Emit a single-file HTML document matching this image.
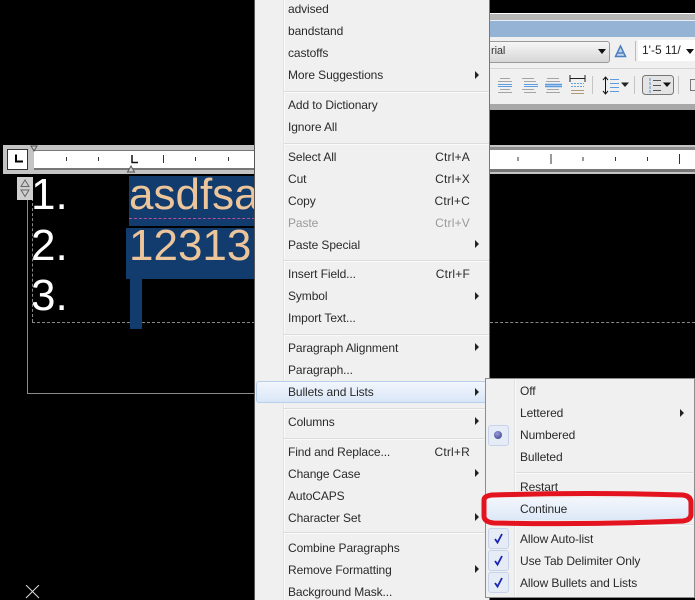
<!DOCTYPE html>
<html><head><meta charset="utf-8"><style>
html,body{margin:0;padding:0;background:#000}
#p{position:relative;width:695px;height:600px;overflow:hidden;background:#000;font-family:"Liberation Sans",sans-serif;filter:blur(.3px)}
#p div{position:absolute}
.t{font-size:12px;line-height:16px;color:#2a2a2a;white-space:nowrap;letter-spacing:-.1px;height:16px}
.k{text-align:right;width:60px;left:410px;letter-spacing:.2px}
.g{color:#9a9a9a}
.a{width:0;height:0;border-left:4px solid #222;border-top:4px solid transparent;border-bottom:4px solid transparent;left:475px}
.s{left:284px;width:205px;height:1px;background:#dcdcdc;border-bottom:1px solid #fafafa}
.s2{left:516px;width:177px;height:1px;background:#dcdcdc;border-bottom:1px solid #fafafa}
.n{font-size:44px;line-height:46px;color:#fff;height:46px}
.o{font-size:44px;line-height:46px;color:#edc59a;height:46px;white-space:nowrap}
.b{background:#123c6e}
.c{left:488px;width:21px;height:21px;background:#e6ecf6;border:1px solid #c6d3ea;border-radius:3px;box-sizing:border-box}
</style></head><body><div id="p">

<!-- toolbar -->
<div style="left:490px;top:13px;width:205px;height:1px;background:#fff"></div>
<div style="left:490px;top:14px;width:205px;height:6px;background:#b6b6b6"></div>
<div style="left:490px;top:20px;width:205px;height:1px;background:#e8eef5"></div>
<div style="left:490px;top:21px;width:205px;height:16px;background:#95b3d5"></div>
<div style="left:490px;top:37px;width:205px;height:68px;background:#f0f0f0"></div>
<div style="left:490px;top:68px;width:205px;height:1px;background:#d4d4d4"></div>
<div style="left:490px;top:104px;width:205px;height:6px;background:#a8a8a8"></div>
<div style="left:480px;top:41px;width:128px;height:20px;background:linear-gradient(#f6f6f6,#d6d6d6);border:1px solid #9a9a9a;border-radius:3px"></div>
<div class="t" style="left:491px;top:43px;font-size:11px;color:#333">rial</div>
<div style="left:598px;top:49px;border-left:4px solid transparent;border-right:4px solid transparent;border-top:5px solid #111"></div>
<svg style="position:absolute;left:613px;top:44px" width="15" height="15"><path d="M7.5 2L2.5 12.5H12.5Z M5 9H10" fill="#c3d5ee" stroke="#4a7fc0" stroke-width="1.5"/></svg>
<div style="left:635px;top:41px;width:1px;height:20px;background:#bbb"></div>
<div style="left:638px;top:40px;width:57px;height:21px;background:#fff"></div>
<div class="t" style="left:642px;top:42px;color:#222;letter-spacing:0">1'-5 11/</div>
<div style="left:686px;top:49px;border-left:4px solid transparent;border-right:4px solid transparent;border-top:5px solid #111"></div>
<svg style="position:absolute;left:490px;top:70px" width="205" height="34" fill="none" stroke-width="1">
<path d="M10 8.500H20M8 11.500H22M10 19.500H20M8 22.500H22" stroke="#a4a4a4"/>
<path d="M8 14.500H22M8 16.500H22" stroke="#5b9be0"/>
<path d="M32 8.500H44M34 11.500H46M32 19.500H44M34 22.500H46" stroke="#a4a4a4"/>
<path d="M34 14.500H48M34 16.500H48" stroke="#5b9be0"/>
<path d="M57 8.500H69M56 11.500H70M57 19.500H69M56 22.500H70" stroke="#a4a4a4"/>
<path d="M55 14.500H72M55 16.500H72" stroke="#5b9be0" stroke-width="1.500"/>
<path d="M80 8.500H95M80 5V12M95 5V12" stroke="#222"/>
<path d="M81 13.500H94M81 16.500H94" stroke="#6aa0dc" stroke-dasharray="2 1"/>
<path d="M81 20.500H94M81 23.500H94" stroke="#b09a78"/>
<path d="M102.500 6V24" stroke="#c4c4c4"/>
<path d="M115.500 8V23M113 10L115.500 7L118 10M113 21L115.500 24L118 21" stroke="#111"/>
<path d="M120 9.500H129M120 13.500H129M120 17.500H129M120 21.500H129" stroke="#5b9be0"/>
<path d="M131 12.500H139L135 17Z" fill="#222"/>
<path d="M144.500 6V24" stroke="#c4c4c4"/>
<rect x="152.500" y="5.500" width="31" height="19" rx="3" fill="#e4e4e4" stroke="#777"/>
<path d="M160 8V23" stroke="#4f8fd8" stroke-dasharray="3 1"/>
<path d="M163 10.500H171M163 15.500H171M163 20.500H171" stroke="#555"/>
<path d="M173 12.500H181L177 17Z" fill="#111"/>
<path d="M188.500 6V24" stroke="#c4c4c4"/>
<rect x="200.500" y="9.500" width="10" height="11" stroke="#777"/>
</svg>

<!-- ruler -->
<div style="left:3px;top:145px;width:252px;height:29px;background:#c4c4c4"></div>
<div style="left:490px;top:145px;width:205px;height:29px;background:#c4c4c4"></div>
<div style="left:490px;top:147px;width:205px;height:3px;background:#8e8e8e"></div>
<div style="left:490px;top:169px;width:205px;height:3px;background:#767676"></div>
<div style="left:34px;top:150px;width:221px;height:20px;background:#fff;border-top:1px solid #777;border-bottom:2px solid #777;box-sizing:border-box"></div>
<div style="left:490px;top:150px;width:205px;height:19px;background:#fff;box-sizing:border-box"></div>
<div style="left:7px;top:149px;width:21px;height:21px;background:#fff;border:1px solid #333;box-sizing:border-box"></div>
<svg style="position:absolute;left:0;top:145px" width="695" height="30" fill="none" stroke="#333">
<path d="M16 9.500V16.500H23" stroke="#000" stroke-width="2"/>
<path d="M31 1H37L34 6Z" fill="#ccc" stroke="#555"/>
<path d="M66.500 12V16M98.500 12V16M163.500 10V18M195.500 12V16M228.500 12V16" />
<path d="M132 10V17.500H138" stroke="#111" stroke-width="1.500"/>
<path d="M131 21L127.500 27H134.500Z" fill="#ccc" stroke="#555"/>
<path d="M518 12V16M551 9V19M583 12V16M615.500 12V16M647.500 12V16M679.500 9V19" />
</svg>

<!-- editor -->
<div style="left:27px;top:198px;width:1px;height:196px;background:#8a8a8a"></div>
<div style="left:27px;top:393px;width:228px;height:1px;background:#8a8a8a"></div>
<div style="left:32px;top:198px;width:0;height:124px;border-left:1px dashed #888"></div>
<div style="left:32px;top:322px;width:223px;height:0;border-top:1px dashed #888"></div>
<div style="left:490px;top:322px;width:205px;height:0;border-top:1px dashed #888"></div>
<svg style="position:absolute;left:17px;top:177px" width="16" height="23"><rect width="16" height="23" fill="#cfcfcf"/><path d="M8 3L4 9.500H12ZM8 19.500L4 13H12Z" fill="none" stroke="#666"/></svg>
<div class="b" style="left:129px;top:176px;width:126px;height:50px"></div>
<div style="left:129px;top:218px;width:126px;height:0;border-top:1px dashed #b84f9e"></div>
<div style="left:126px;top:228px;width:129px;height:51px" class="b"></div>
<div style="left:130px;top:279px;width:12px;height:50px" class="b"></div>
<div class="n" style="left:31px;top:172px">1.</div>
<div class="n" style="left:31px;top:223px">2.</div>
<div class="n" style="left:31px;top:273px">3.</div>
<div style="left:129px;top:172px;width:126px;height:46px;overflow:hidden"><div class="o" style="left:0;top:0">asdfsa</div></div>
<div class="o" style="left:129px;top:223px;width:126px;overflow:hidden">12313</div>
<svg style="position:absolute;left:25px;top:585px" width="15" height="15"><path d="M1 0L14 13M14 0L1 13" stroke="#ddd" fill="none"/></svg>

<!-- main menu -->
<div style="left:254px;top:-2px;width:236px;height:604px;background:#f0f0f0;border-left:1px solid #555;border-right:1px solid #777;box-sizing:border-box"></div>
<div style="left:283px;top:0;width:1px;height:600px;background:#e2e2e2"></div>
<div style="left:284px;top:0;width:1px;height:600px;background:#fafafa"></div>

<div class="s" style="top:91px"></div>
<div class="s" style="top:143px"></div>
<div class="s" style="top:260px"></div>
<div class="s" style="top:334px"></div>
<div class="s" style="top:408px"></div>
<div class="s" style="top:438px"></div>
<div class="s" style="top:532px"></div>

<div class="t" style="left:288px;top:1px">advised</div>
<div class="t" style="left:288px;top:23px">bandstand</div>
<div class="t" style="left:288px;top:45px">castoffs</div>
<div class="t" style="left:288px;top:67px">More Suggestions</div><div class="a" style="top:71px"></div>
<div class="t" style="left:288px;top:97px">Add to Dictionary</div>
<div class="t" style="left:288px;top:119px">Ignore All</div>
<div class="t" style="left:288px;top:149px">Select All</div><div class="t k" style="top:149px">Ctrl+A</div>
<div class="t" style="left:288px;top:171px">Cut</div><div class="t k" style="top:171px">Ctrl+X</div>
<div class="t" style="left:288px;top:193px">Copy</div><div class="t k" style="top:193px">Ctrl+C</div>
<div class="t g" style="left:288px;top:215px">Paste</div><div class="t k g" style="top:215px">Ctrl+V</div>
<div class="t" style="left:288px;top:237px">Paste Special</div><div class="a" style="top:240px"></div>
<div class="t" style="left:288px;top:266px">Insert Field...</div><div class="t k" style="top:266px">Ctrl+F</div>
<div class="t" style="left:288px;top:288px">Symbol</div><div class="a" style="top:292px"></div>
<div class="t" style="left:288px;top:310px">Import Text...</div>
<div class="t" style="left:288px;top:340px">Paragraph Alignment</div><div class="a" style="top:343px"></div>
<div class="t" style="left:288px;top:362px">Paragraph...</div>
<div style="left:256px;top:381px;width:232px;height:22px;box-sizing:border-box;background:linear-gradient(#f2f6fc,#d9e6f7);border:1px solid #b8cfec;border-radius:3px"></div>
<div class="t" style="left:288px;top:384px">Bullets and Lists</div><div class="a" style="top:388px"></div>
<div class="t" style="left:288px;top:414px">Columns</div><div class="a" style="top:417px"></div>
<div class="t" style="left:288px;top:444px">Find and Replace...</div><div class="t k" style="top:444px">Ctrl+R</div>
<div class="t" style="left:288px;top:466px">Change Case</div><div class="a" style="top:469px"></div>
<div class="t" style="left:288px;top:488px">AutoCAPS</div>
<div class="t" style="left:288px;top:510px">Character Set</div><div class="a" style="top:513px"></div>
<div class="t" style="left:288px;top:540px">Combine Paragraphs</div>
<div class="t" style="left:288px;top:562px">Remove Formatting</div><div class="a" style="top:565px"></div>
<div class="t" style="left:288px;top:584px">Background Mask...</div>

<!-- submenu -->
<div style="left:485px;top:378px;width:210px;height:220px;background:#f0f0f0;border:1px solid #8c8c8c;box-sizing:border-box"></div>
<div style="left:514px;top:379px;width:1px;height:218px;background:#e2e2e2"></div>
<div style="left:515px;top:379px;width:1px;height:218px;background:#fafafa"></div>
<div class="s2" style="top:472px"></div>
<div class="s2" style="top:524px"></div>

<div class="c" style="top:425px"></div>
<div style="left:494px;top:431px;width:8px;height:8px;border-radius:50%;background:radial-gradient(circle at 40% 35%,#9a9ce0,#34367e)"></div>
<div class="c" style="top:528px"></div>
<div class="c" style="top:550px"></div>
<div class="c" style="top:572px"></div>
<svg style="position:absolute;left:488px;top:528px" width="21" height="66" fill="none" stroke="#1a25b0" stroke-width="1.800"><path d="M7 11L9.500 14.500L14 6M7 33L9.500 36.500L14 28M7 55L9.500 58.500L14 50"/></svg>

<div class="t" style="left:520px;top:383px">Off</div>
<div class="t" style="left:520px;top:405px">Lettered</div><div class="a" style="left:680px;top:409px"></div>
<div class="t" style="left:520px;top:427px">Numbered</div>
<div class="t" style="left:520px;top:449px">Bulleted</div>
<div class="t" style="left:520px;top:479px">Restart</div>
<div style="left:487px;top:498px;width:204px;height:22px;background:linear-gradient(#f2f6fc,#dce8f7);border-radius:3px"></div>
<div class="t" style="left:520px;top:501px">Continue</div>
<div class="t" style="left:520px;top:531px">Allow Auto-list</div>
<div class="t" style="left:520px;top:553px">Use Tab Delimiter Only</div>
<div class="t" style="left:520px;top:575px">Allow Bullets and Lists</div>

<svg style="position:absolute;left:478px;top:490px" width="217" height="38" fill="none"><path d="M6 10Q6 6 14 5Q110 2 205 5Q213 6 213 13V24Q213 30 205 31Q110 35 16 33Q6 32 6 26Z" stroke="#e3131f" stroke-width="5"/></svg>

</div></body></html>
